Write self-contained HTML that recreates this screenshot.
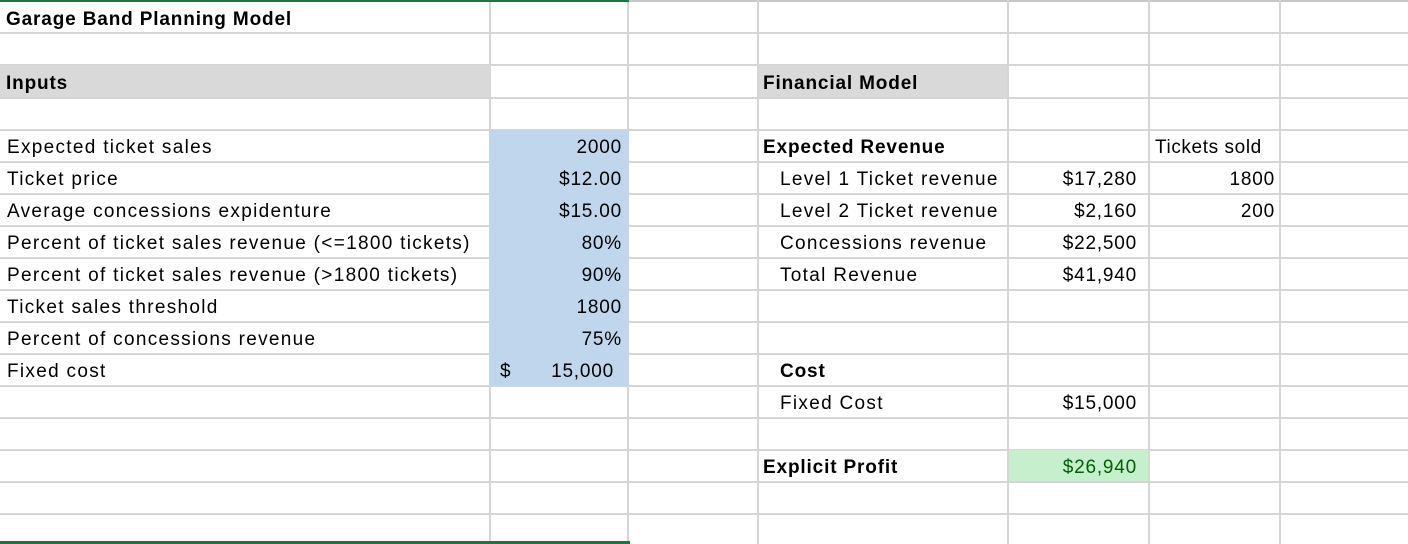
<!DOCTYPE html>
<html><head><meta charset="utf-8"><style>
body{margin:0;width:1408px;height:544px;overflow:hidden;background:#fff;font-family:"Liberation Sans",Arial,sans-serif;font-size:19px;letter-spacing:1.3px;color:#000}
.c{position:absolute;white-space:nowrap;line-height:32px;height:32px;margin-top:2px}
.r{text-align:right;letter-spacing:0.8px}
.b{font-weight:bold;letter-spacing:0.85px}
.h{position:absolute;left:0;width:1408px;height:2px;background:#d5d5d5}
.v{position:absolute;top:0;height:544px;width:2px;background:#d5d5d5}
.f{position:absolute}
</style></head><body>
<div class="h" style="top:0;background:#c8c8c8"></div>
<div class="h" style="top:32px"></div><div class="h" style="top:64px"></div><div class="h" style="top:97px"></div>
<div class="h" style="top:129px"></div><div class="h" style="top:161px"></div><div class="h" style="top:193px"></div>
<div class="h" style="top:225px"></div><div class="h" style="top:257px"></div><div class="h" style="top:289px"></div>
<div class="h" style="top:321px"></div><div class="h" style="top:353px"></div><div class="h" style="top:385px"></div>
<div class="h" style="top:417px"></div><div class="h" style="top:449px"></div><div class="h" style="top:481px"></div>
<div class="h" style="top:513px"></div>
<div class="v" style="left:489px"></div><div class="v" style="left:627px"></div><div class="v" style="left:757px"></div>
<div class="v" style="left:1007px"></div><div class="v" style="left:1148px"></div><div class="v" style="left:1279px"></div>

<div class="f" style="left:0;top:65px;width:490px;height:32px;background:#d9d9d9"></div>
<div class="f" style="left:759px;top:65px;width:248px;height:32px;background:#d9d9d9"></div>
<div class="f" style="left:489px;top:130px;width:140px;height:256px;background:#c0d6ec"></div>
<div class="f" style="left:1009px;top:450px;width:139px;height:31px;background:#c6efce"></div>

<div class="f" style="left:0;top:0;width:629px;height:2px;background:#217346"></div>
<div class="f" style="left:0;top:541px;width:630px;height:3px;background:#217346"></div>

<div class="c b" style="left:6px;top:2px">Garage Band Planning Model</div>
<div class="c b" style="left:6px;top:66px">Inputs</div>
<div class="c b" style="left:763px;top:66px">Financial Model</div>

<div class="c" style="left:7px;top:130px">Expected ticket sales</div>
<div class="c" style="left:7px;top:162px">Ticket price</div>
<div class="c" style="left:7px;top:194px">Average concessions expidenture</div>
<div class="c" style="left:7px;top:226px">Percent of ticket sales revenue (&lt;=1800 tickets)</div>
<div class="c" style="left:7px;top:258px">Percent of ticket sales revenue (&gt;1800 tickets)</div>
<div class="c" style="left:7px;top:290px">Ticket sales threshold</div>
<div class="c" style="left:7px;top:322px">Percent of concessions revenue</div>
<div class="c" style="left:7px;top:354px">Fixed cost</div>

<div class="c r" style="right:786px;top:130px">2000</div>
<div class="c r" style="right:786px;top:162px">$12.00</div>
<div class="c r" style="right:786px;top:194px">$15.00</div>
<div class="c r" style="right:786px;top:226px">80%</div>
<div class="c r" style="right:786px;top:258px">90%</div>
<div class="c r" style="right:786px;top:290px">1800</div>
<div class="c r" style="right:786px;top:322px">75%</div>
<div class="c" style="left:500px;top:354px">$</div>
<div class="c r" style="right:794px;top:354px">15,000</div>

<div class="c b" style="left:763px;top:130px">Expected Revenue</div>
<div class="c" style="left:780px;top:162px">Level 1 Ticket revenue</div>
<div class="c" style="left:780px;top:194px">Level 2 Ticket revenue</div>
<div class="c" style="left:780px;top:226px">Concessions revenue</div>
<div class="c" style="left:780px;top:258px">Total Revenue</div>
<div class="c r" style="right:271px;top:162px">$17,280</div>
<div class="c r" style="right:271px;top:194px">$2,160</div>
<div class="c r" style="right:271px;top:226px">$22,500</div>
<div class="c r" style="right:271px;top:258px">$41,940</div>
<div class="c" style="left:1155px;top:130px;letter-spacing:0.6px">Tickets sold</div>
<div class="c r" style="right:133px;top:162px">1800</div>
<div class="c r" style="right:133px;top:194px">200</div>

<div class="c b" style="left:780px;top:354px">Cost</div>
<div class="c" style="left:780px;top:386px">Fixed Cost</div>
<div class="c r" style="right:271px;top:386px">$15,000</div>
<div class="c b" style="left:763px;top:450px">Explicit Profit</div>
<div class="c r" style="right:271px;top:450px;color:#006100">$26,940</div>
</body></html>
